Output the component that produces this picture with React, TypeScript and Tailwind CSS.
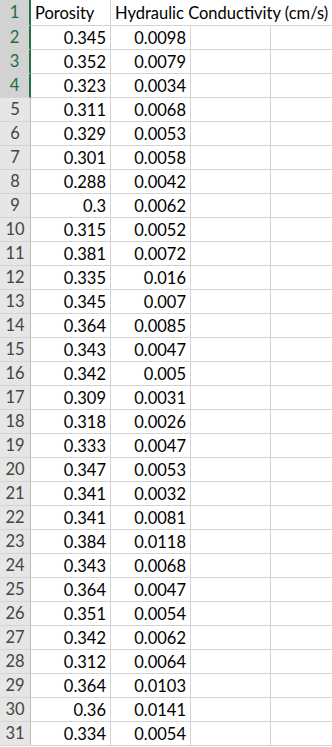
import React from 'react';

const ROWS: [string, string][] = [
  ["0.345", "0.0098"],
  ["0.352", "0.0079"],
  ["0.323", "0.0034"],
  ["0.311", "0.0068"],
  ["0.329", "0.0053"],
  ["0.301", "0.0058"],
  ["0.288", "0.0042"],
  ["0.3", "0.0062"],
  ["0.315", "0.0052"],
  ["0.381", "0.0072"],
  ["0.335", "0.016"],
  ["0.345", "0.007"],
  ["0.364", "0.0085"],
  ["0.343", "0.0047"],
  ["0.342", "0.005"],
  ["0.309", "0.0031"],
  ["0.318", "0.0026"],
  ["0.333", "0.0047"],
  ["0.347", "0.0053"],
  ["0.341", "0.0032"],
  ["0.341", "0.0081"],
  ["0.384", "0.0118"],
  ["0.343", "0.0068"],
  ["0.364", "0.0047"],
  ["0.351", "0.0054"],
  ["0.342", "0.0062"],
  ["0.312", "0.0064"],
  ["0.364", "0.0103"],
  ["0.36", "0.0141"],
  ["0.334", "0.0054"],
];

const RowHead: React.FC<{ n: number }> = ({ n }) => {
  const sel = n <= 4;
  return (
    <div
      className={`w-[31px] shrink-0 flex items-center justify-center border-b border-[#d4d4d4] ${
        sel ? 'bg-[#d2d2d2] text-[#1e6c41] border-r-2 border-r-[#217346]' : 'bg-[#e6e6e6] text-[#444] border-r border-r-[#bdbdbd]'
      }`}
    >
      {n}
    </div>
  );
};

const App: React.FC = () => {
  return (
    <div className="w-[332px] h-[747px] overflow-hidden bg-white text-[16.5px] leading-none text-black" style={{ fontFamily: 'Lato, "Open Sans", sans-serif' }}>
      <div className="flex h-[26px]">
        <RowHead n={1} />
        <div className="w-[80px] shrink-0 border-b border-r border-[#d4d4d4] flex items-end pl-[4px] pb-[4px]">Porosity</div>
        <div className="flex-1 border-b border-[#d4d4d4] flex items-end pl-[4px] pb-[4px] whitespace-nowrap">Hydraulic Conductivity (cm/s)</div>
      </div>
      {ROWS.map((r, i) => (
        <div key={i} className="flex h-[24px]">
          <RowHead n={i + 2} />
          <div className="w-[80px] shrink-0 border-b border-r border-[#d4d4d4] flex items-end justify-end pr-[4px] pb-[3px]">{r[0]}</div>
          <div className="w-[80px] shrink-0 border-b border-r border-[#d4d4d4] flex items-end justify-end pr-[4px] pb-[3px]">{r[1]}</div>
          <div className="w-[80px] shrink-0 border-b border-r border-[#d4d4d4]"></div>
          <div className="flex-1 border-b border-[#d4d4d4]"></div>
        </div>
      ))}
    </div>
  );
};

export default App;
